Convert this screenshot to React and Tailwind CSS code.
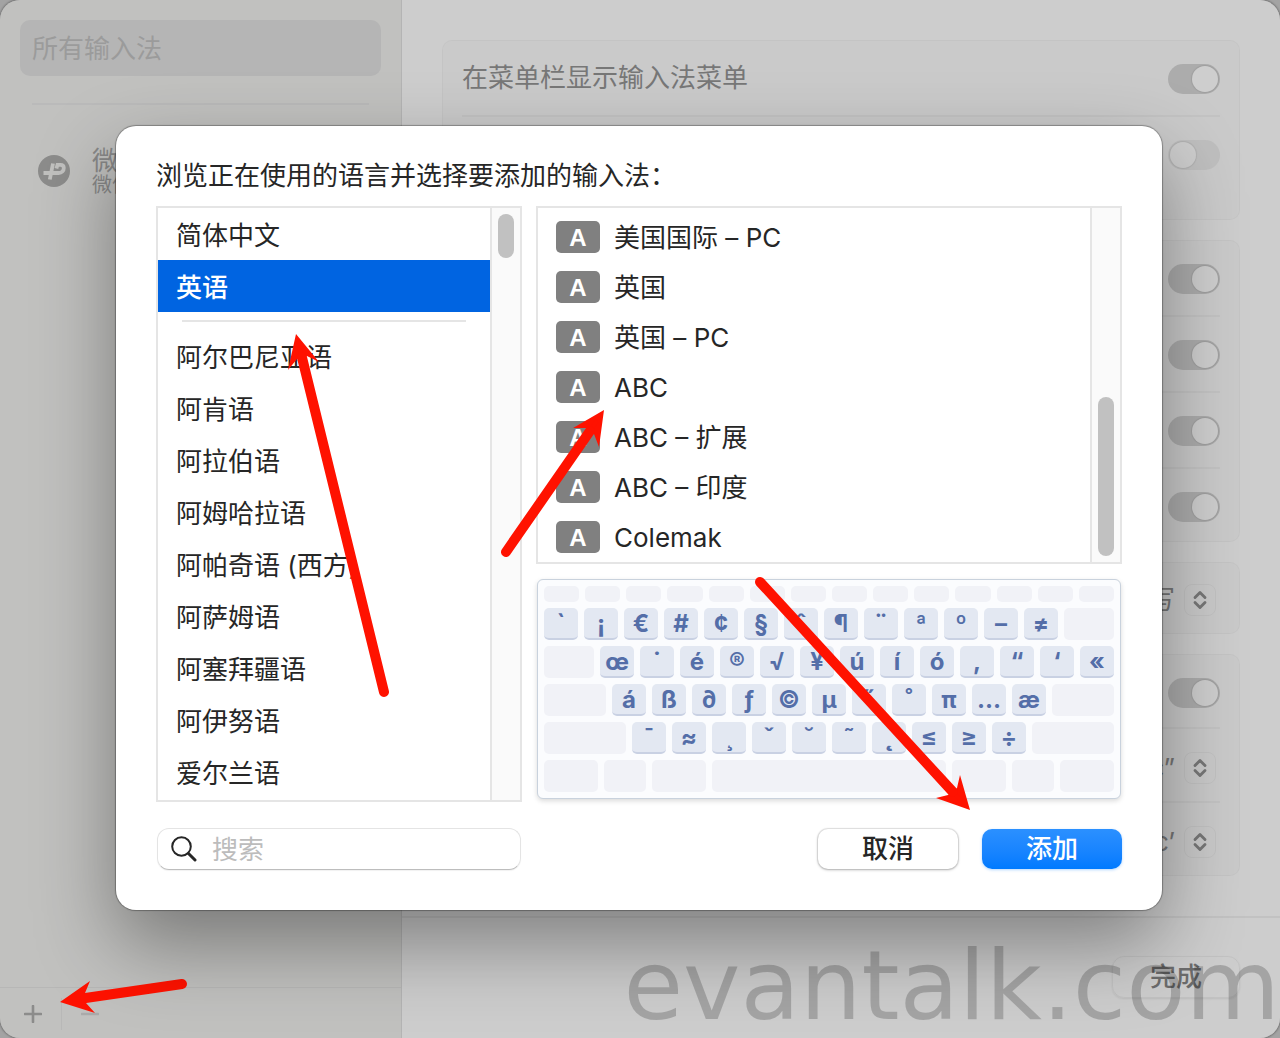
import clsx from "clsx";
import { ChevronDown, ChevronUp } from "lucide-react";
import { useState } from "react";

const languages = ["阿尔巴尼亚语", "阿肯语", "阿拉伯语", "阿姆哈拉语", "阿帕奇语 (西方)", "阿萨姆语", "阿塞拜疆语", "阿伊努语", "爱尔兰语"];

const sources = ["美国国际 – PC", "英国", "英国 – PC", "ABC", "ABC – 扩展", "ABC – 印度", "Colemak"];

const numberKeys = ["`", "¡", "€", "#", "¢", "§", "ˆ", "¶", "¨", "ª", "º", "–", "≠"];
const topKeys = ["œ", "˙", "é", "®", "√", "¥", "ú", "í", "ó", ",", "“", "‘", "«"];
const homeKeys = ["á", "ß", "∂", "ƒ", "©", "µ", "˝", "˚", "π", "…", "æ"];
const bottomKeys = ["¯", "≈", "¸", "ˇ", "˘", "˜", "˛", "≤", "≥", "÷"];

const Toggle = ({ label, defaultChecked }) => (
  <input
    type="checkbox"
    role="switch"
    aria-label={label}
    defaultChecked={defaultChecked}
    className="h-[30px] w-[52px] shrink-0 appearance-none rounded-full bg-[#bfbfbf] p-0.5 before:block before:size-[26px] before:rounded-full before:bg-[#cecece] before:shadow-[0_0_1px_1px_rgba(0,0,0,0.08)] checked:bg-[#acacac] checked:before:ml-[22px]"
  />
);

const Picker = ({ label, value }) => (
  <div className="relative flex h-8 items-center pr-1">
    <select
      aria-label={label}
      className="h-8 appearance-none bg-transparent pr-[41px] text-right text-[26px] leading-8 text-[#777]"
    >
      <option>{value}</option>
    </select>
    <span className="pointer-events-none absolute right-1 flex size-8 flex-col items-center justify-center rounded-lg border border-black/[0.04] text-[#777]">
      <ChevronUp className="-mb-[5px] size-6" strokeWidth={3.4} />
      <ChevronDown className="-mt-[5px] size-6" strokeWidth={3.4} />
    </span>
  </div>
);

const Card = ({ children }) => <div className="rounded-[10px] border border-black/[0.03] bg-black/[0.01] px-[19px]">{children}</div>;

const Row = ({ title, className, children }) => (
  <div className={clsx("flex items-start justify-between border-black/[0.03] not-last:border-b-2", className)}>
    <span className="text-[26px] leading-[28px] text-[#777]">{title}</span>
    {children}
  </div>
);

const Arrow = ({ head, tail, className }) => {
  const [tip] = head;
  const neck = [(head[2][0] + head[3][0]) / 2, (head[2][1] + head[3][1]) / 2];
  const outline = head.map((point) => point.join(",")).join(" ");
  return (
    <g className={className} fill="#ff1200" stroke="#ff1200">
      <polygon points={outline} strokeWidth="0" />
      <line x1={(neck[0] + tip[0]) / 2} y1={(neck[1] + tip[1]) / 2} x2={neck[0]} y2={neck[1]} strokeWidth="4" />
      <line x1={neck[0]} y1={neck[1]} x2={tail[0]} y2={tail[1]} strokeWidth="10" strokeLinecap="round" />
    </g>
  );
};

const Blank = ({ className }) => <span className={clsx("rounded-[5px] bg-[#f1f2f7]", className)} />;

const Keys = ({ keys }) =>
  keys.map((key) => (
    <kbd
      key={key}
      className="flex w-[34px] items-center justify-center rounded-[5px] border-b-2 border-[#c9d1e3] bg-[#e3e8f2] pt-0.5 font-[Inter,'Noto_Sans','DejaVu_Sans',sans-serif] text-2xl leading-7 font-bold text-[#546ea8]"
    >
      {key}
    </kbd>
  ));

const Keyboard = () => (
  <div className="mx-px flex flex-col gap-1.5 rounded-md border border-[#c9d2dd] bg-[#fbfcfe] p-1.5 shadow-[0_2px_5px_rgba(0,0,0,0.15)]">
    <div className="flex h-4 gap-1.5">
      {Array.from({ length: 14 }, (_, index) => (
        <Blank key={index} className="flex-1" />
      ))}
    </div>
    <div className="flex h-8 gap-1.5">
      <Keys keys={numberKeys} />
      <Blank className="flex-1" />
    </div>
    <div className="flex h-8 gap-1.5">
      <Blank className="flex-1" />
      <Keys keys={topKeys} />
    </div>
    <div className="flex h-8 gap-1.5">
      <Blank className="flex-1" />
      <Keys keys={homeKeys} />
      <Blank className="flex-1" />
    </div>
    <div className="flex h-8 gap-1.5">
      <Blank className="flex-1" />
      <Keys keys={bottomKeys} />
      <Blank className="flex-1" />
    </div>
    <div className="flex h-8 gap-1.5">
      <Blank className="w-[54px]" />
      <Blank className="w-[42px]" />
      <Blank className="w-[54px]" />
      <Blank className="flex-1" />
      <Blank className="w-[54px]" />
      <Blank className="w-[42px]" />
      <Blank className="w-[54px]" />
    </div>
  </div>
);

const ScrollTrack = ({ atEnd }) => (
  <div className={clsx("flex w-[30px] shrink-0 border-l-2 border-[#e5e5e5] bg-[#fafafa] px-1.5 py-1.5", atEnd && "items-end")} aria-hidden="true">
    <span className={clsx("w-4 rounded-full bg-[#c1c1c1]", atEnd ? "h-[159px]" : "h-11")} />
  </div>
);

const Sidebar = () => (
  <aside className="flex w-[402px] shrink-0 flex-col border-r border-[#b4b4b4] bg-[#c1c1bf]">
    <div className="flex-1 p-5">
      <button className="h-14 w-full rounded-[10px] bg-[#b5b5b5] px-3 text-left text-[26px] text-[#9b9b9b]">所有输入法</button>
      <hr className="mx-3 mt-[27px] border-t-2 border-[#bababa]" />
      <div className="mt-10 flex items-center gap-[22px] px-[18px] pt-0.5">
        <svg viewBox="0 0 32 32" className="size-8 shrink-0">
          <circle cx="16" cy="16" r="16" fill="#8c8c8b" />
          <path d="M5.5 18H20.5C24 18 25.8 15.5 25.8 13C25.8 10.8 24.3 9.8 22.3 9.8H19.5L18.4 13.5M15 8.5L11.8 24.5" fill="none" stroke="#c1c1bf" strokeWidth="3.8" />
        </svg>
        <div className="whitespace-nowrap text-[#888]">
          <p className="text-[26px] leading-7">微信</p>
          <p className="text-xl leading-5">微信</p>
        </div>
      </div>
    </div>
    <div className="relative flex h-[51px] items-center border-t border-[#b7b7b6] pt-0.5 text-[#8c8c8b]">
      <button aria-label="添加" className="flex h-8 w-[62px] items-center justify-center border-r border-[#b8b8b7] pl-1">
        <svg viewBox="0 0 18 18" className="size-[18px]" stroke="currentColor" strokeWidth="2.6" strokeLinecap="round">
          <path d="M1 9H17M9 1V17" />
        </svg>
      </button>
      <button aria-label="移除" className="flex h-8 w-14 items-center justify-center text-[#aaa]">
        <svg viewBox="0 0 18 18" className="size-[18px]" stroke="currentColor" strokeWidth="2.6" strokeLinecap="round">
          <path d="M1 9H17" />
        </svg>
      </button>
      <svg viewBox="0 0 130 40" className="pointer-events-none absolute bottom-5 left-[60px] h-10 w-[130px]">
        <Arrow head={[[0, 24], [30, 3], [25, 15], [26, 25], [35, 35]]} tail={[122, 6]} />
      </svg>
    </div>
  </aside>
);

const Settings = () => (
  <main className="flex min-w-0 flex-1 flex-col bg-[#cdcdcd]">
    <div className="flex flex-1 flex-col gap-5 p-10 pb-0">
      <Card>
        <Row title="在菜单栏显示输入法菜单" className="h-[76px] pt-[23px]">
          <Toggle label="在菜单栏显示输入法菜单" defaultChecked />
        </Row>
        <Row className="h-[102px] pt-[23px]">
          <Toggle label="使用大写锁定键切换" />
        </Row>
      </Card>
      <Card>
        <Row className="h-[76px] pt-[23px]">
          <Toggle label="自动纠正拼写" defaultChecked />
        </Row>
        <Row className="h-[76px] pt-[23px]">
          <Toggle label="自动大写字词的首字母" defaultChecked />
        </Row>
        <Row className="h-[76px] pt-[23px]">
          <Toggle label="显示内联预测文本" defaultChecked />
        </Row>
        <Row className="h-[72px] pt-[23px]">
          <Toggle label="连按两下空格键插入句号" defaultChecked />
        </Row>
      </Card>
      <Card>
        <Row className="h-[70px] pt-[21px]">
          <Picker label="拼写" value="拼写" />
        </Row>
      </Card>
      <Card>
        <Row className="h-[74px] pt-[23px]">
          <Toggle label="使用智能引号和破折号" defaultChecked />
        </Row>
        <Row className="h-[74px] pt-[23px]">
          <Picker label="双引号" value="“abc”" />
        </Row>
        <Row className="h-[72px] pt-[23px]">
          <Picker label="单引号" value="‘abc’" />
        </Row>
      </Card>
    </div>
    <footer className="mt-10 flex justify-end border-t-2 border-black/5 px-10 pt-[38px] pb-10">
      <button className="h-[42px] w-32 rounded-xl border border-black/5 text-[26px] leading-10 font-medium text-[#6c6c6c] shadow-[0_1px_2px_rgba(0,0,0,0.08)]">完成</button>
    </footer>
  </main>
);

const LanguageRow = ({ name, selected, onSelect }) => (
  <li>
    <button
      className={clsx("block h-[52px] w-full overflow-hidden pt-0.5 pl-[18px] text-left whitespace-nowrap", selected && "bg-[#0064e1] font-medium text-white")}
      onClick={() => onSelect(name)}
    >
      {name}
    </button>
  </li>
);

const AddSourceDialog = () => {
  const [language, setLanguage] = useState("英语");
  const [query, setQuery] = useState("");

  return (
    <div
      role="dialog"
      aria-labelledby="dialog-title"
      className="relative w-full max-w-[1046px] rounded-[20px] bg-white px-10 pt-[30px] pb-10 text-[26px] text-[#262626] shadow-[0_0_1px_1px_rgba(0,0,0,0.3),0_34px_80px_rgba(0,0,0,0.38)]"
    >
      <h1 id="dialog-title" className="leading-10">浏览正在使用的语言并选择要添加的输入法：</h1>
      <div className="mt-2.5 flex gap-3.5">
        <div className="flex w-[366px] shrink-0 border-2 border-[#e5e5e5]">
          <ul className="min-w-0 flex-1">
            <LanguageRow name="简体中文" selected={language === "简体中文"} onSelect={setLanguage} />
            <LanguageRow name="英语" selected={language === "英语"} onSelect={setLanguage} />
            <li className="mx-6 my-2 h-0.5 bg-[#e5e5e5]" />
            {languages.map((name) => (
              <LanguageRow key={name} name={name} selected={language === name} onSelect={setLanguage} />
            ))}
            <li className="h-0.5" />
          </ul>
          <ScrollTrack />
        </div>
        <div className="flex min-w-0 flex-1 flex-col gap-[15px]">
          <div className="flex border-2 border-[#e5e5e5]">
            <ul className="min-w-0 flex-1 pt-1">
              {sources.map((source) => (
                <li key={source}>
                  <button className="flex h-[50px] w-full items-center gap-3.5 pl-[18px] text-left">
                    <span className="flex h-8 w-11 items-center justify-center rounded-[5px] bg-[#808080] pt-0.5 font-['Liberation_Sans',sans-serif] text-2xl font-bold text-white">A</span>
                    <span>{source}</span>
                  </button>
                </li>
              ))}
            </ul>
            <ScrollTrack atEnd />
          </div>
          <Keyboard />
        </div>
      </div>
      <div className="mt-[26px] flex items-center justify-between">
        <label className="mx-px flex h-[42px] w-[364px] items-center gap-[15px] rounded-xl border border-[#e4e4e4] border-b-[#bdbdbd] pl-[13px] shadow-[0_1px_1px_rgba(0,0,0,0.06)]">
          <svg viewBox="0 0 26 26" className="size-[26px]" fill="none" stroke="#262626" strokeLinecap="round" aria-hidden="true">
            <circle cx="10.5" cy="10.5" r="9.3" strokeWidth="2" />
            <path d="M17.5 17.5L24 24" strokeWidth="3" />
          </svg>
          <input
            className="h-9 min-w-0 flex-1 bg-transparent outline-none placeholder:text-[#bcbcbc]"
            aria-label="搜索"
            placeholder="搜索"
            value={query}
            onChange={(event) => setQuery(event.target.value)}
          />
        </label>
        <div className="flex gap-6">
          <button className="h-10 w-[140px] rounded-[10px] bg-white leading-10 font-medium shadow-[0_0_1px_1px_rgba(0,0,0,0.1),0_1px_3px_rgba(0,0,0,0.25)]">取消</button>
          <button className="h-10 w-[140px] rounded-[10px] bg-linear-to-b from-[#2b90ff] to-[#007aff] leading-10 font-medium text-white shadow-[0_1px_3px_rgba(0,122,255,0.3)]">添加</button>
        </div>
      </div>
      <svg viewBox="0 0 1046 784" className="pointer-events-none absolute top-0 left-0 h-[784px] w-[1046px]">
        <Arrow head={[[180, 208], [172, 244], [181, 233], [191, 230], [203, 236]]} tail={[268, 566]} />
        <Arrow head={[[488, 284], [457, 302], [470, 302], [478, 308], [483, 321]]} tail={[390, 426]} />
        <Arrow head={[[854, 684], [844, 649], [841, 662], [832, 669], [820, 672]]} tail={[644, 456]} />
      </svg>
    </div>
  );
};

const App = () => (
  <div className="relative min-h-screen overflow-hidden bg-[#a3a3a3] font-[Inter,'Noto_Sans_CJK_SC',sans-serif]" lang="zh-CN">
    <div className="flex min-h-screen overflow-hidden rounded-[20px] shadow-[0_0_2px_1px_rgba(0,0,0,0.3)]">
      <Sidebar />
      <Settings />
    </div>
    <p className="pointer-events-none absolute right-0 bottom-0 font-['DejaVu_Sans',sans-serif] text-[97px] leading-[104px] text-black/20">evantalk.com</p>
    <div className="pointer-events-none absolute inset-0 flex items-start justify-center pt-[126px] pr-0.5 *:pointer-events-auto">
      <AddSourceDialog />
    </div>
  </div>
);

export default App;
